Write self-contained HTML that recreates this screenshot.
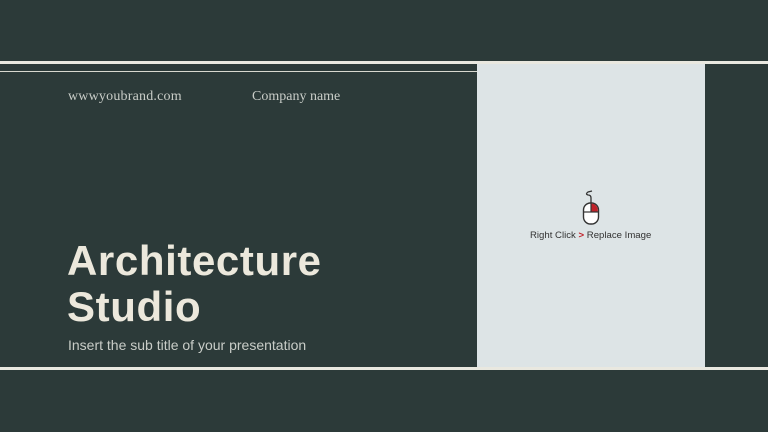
<!DOCTYPE html>
<html><head><style>
body{margin:0;width:768px;height:432px;background:#2c3a39;position:relative;overflow:hidden;font-family:"Liberation Sans",sans-serif}
.a{position:absolute}
</style></head><body>
<div class="a" style="left:0;top:61px;width:768px;height:3px;background:#e9e8e0"></div>
<div class="a" style="left:0;top:71px;width:477px;height:1px;background:#d8d8d0"></div>
<div class="a" style="left:477px;top:64px;width:228px;height:304px;background:#dde4e6"></div>
<div class="a" style="left:0;top:367px;width:768px;height:3px;background:#e9e8e0"></div>
<div class="a" style="left:68px;top:89px;font-family:'Liberation Serif',serif;font-size:14px;letter-spacing:0.2px;color:#c9cdc8">wwwyoubrand.com</div>
<div class="a" style="left:252px;top:89px;font-family:'Liberation Serif',serif;font-size:14px;color:#c9cdc8">Company name</div>
<div class="a" style="left:67px;top:238px;font-size:42px;font-weight:bold;color:#ece8dc;line-height:46px;letter-spacing:0.6px">Architecture<br>Studio</div>
<div class="a" style="left:68px;top:337px;font-size:14px;color:#c9cdc8">Insert the sub title of your presentation</div>
<svg class="a" style="left:580px;top:189px" width="22" height="38" viewBox="0 0 22 38">
<path d="M11 14 V9 Q11 6 8 6 Q5 5 8 3 L12 2" fill="none" stroke="#333" stroke-width="1.3"/>
<rect x="3.5" y="14" width="15" height="21" rx="7" fill="#fff" stroke="#333" stroke-width="1.4"/>
<path d="M11 14.7 A6.3 6.3 0 0 1 17.8 21 V23 H11 Z" fill="#c0222a"/>
<line x1="4" y1="23" x2="18" y2="23" stroke="#333" stroke-width="1.2"/>
<line x1="11" y1="14" x2="11" y2="23" stroke="#333" stroke-width="1.2"/>
</svg>
<div class="a" style="left:530px;top:230px;font-size:9.6px;color:#333">Right Click <span style="color:#c0222a;font-weight:bold">&gt;</span> Replace Image</div>
</body></html>
